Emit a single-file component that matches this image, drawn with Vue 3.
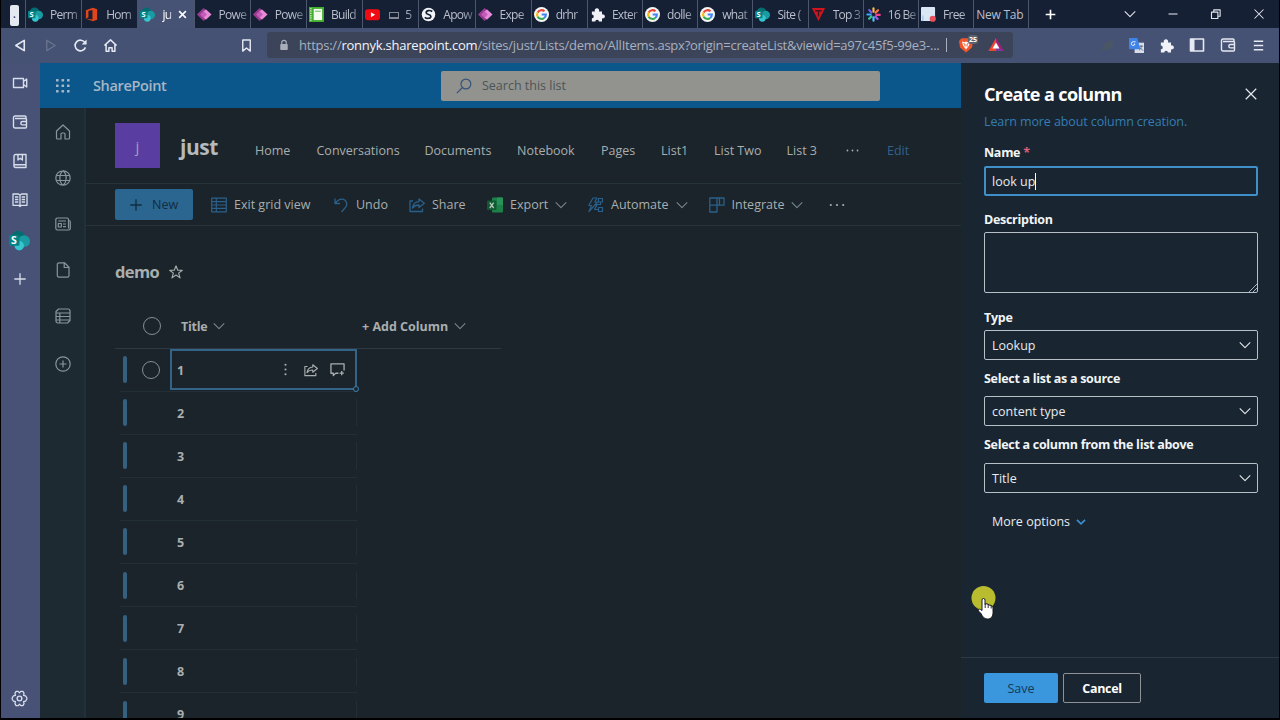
<script setup>
import { h, ref } from 'vue'

const line = (d, w = 1.2) => `<path d="${d}" fill="none" stroke="currentColor" stroke-width="${w}" stroke-linejoin="round"/>`

const sharePoint = '<circle cx="7" cy="5.5" r="5" fill="#036c70"/><circle cx="11.5" cy="8.5" r="4.5" fill="#1a9ba1"/><circle cx="7.8" cy="12" r="3.6" fill="#37c6d0"/><rect x="0" y="4" width="8" height="8" rx="1" fill="#038387"/><text x="1.6" y="11" font-family="Open Sans, sans-serif" font-size="8" font-weight="700" fill="#fff">S</text>'
const google = '<circle cx="8" cy="8" r="8" fill="#f5f5f5"/><g fill="none" stroke-width="2.2"><path d="M11.2 4.6A4.7 4.7 0 0 0 3.9 5.8" stroke="#ea4335"/><path d="M3.9 5.8a4.7 4.7 0 0 0 0 4.5" stroke="#fbbc05"/><path d="M3.9 10.3a4.7 4.7 0 0 0 7 1.4" stroke="#34a853"/><path d="M10.9 11.7c1.2-.9 1.8-2.1 1.8-3.7H8.2" stroke="#4285f4"/></g>'
const powerApps = '<path d="M7 1L14 8L7 15L0 8Z" fill="#9b3b92"/><path d="M9.5 2.5L15.5 8L9.5 13.5L4 8Z" fill="#e58bd8"/><path d="M7 4.5L10.5 8L7 11.5L3.5 8Z" fill="#c45bb8"/>'
const puzzle = '<path d="M2 4.8H5.2a2.4 2.4 0 1 1 4.4 0H12.800V8a2.200 2.200 0 1 1 0 4V15.500H9.500a1.900 1.900 0 1 0-3.800 0H2V12a2 2 0 1 0 0-4Z" fill="#f0f2f7"/>'
const wallet = line('M14 4.5V3a1 1 0 0 0-1-1H3a1.5 1.5 0 0 0-1.5 1.5v9A1.5 1.5 0 0 0 3 14h10.5a1 1 0 0 0 1-1V5.5a1 1 0 0 0-1-1H3M14.5 7.5H10.5a1.7 1.7 0 0 0 0 3.4H14.5', 1.4)

const icons = {
  sharePoint,
  google,
  powerApps,
  puzzle,
  wallet,
  office: '<path d="M2 3.5L9.5 .8L14 2.4V13.6L9.5 15.2L2 12.5L9 13.2V3.2L4.7 4.3V11L2 12.5Z" fill="#e2451c"/>',
  book: '<rect width="16" height="16" fill="#3eae2b"/><path d="M5 2h9v12H5z" fill="#f3fbef"/><path d="M2 1v14" stroke="#d7f2cd" stroke-width="1.3" stroke-dasharray="1.5 1"/><path d="M6.5 4.5h6" stroke="#62b752"/>',
  youtube: '<rect y="2.5" width="16" height="11.5" rx="3" fill="#f20a12"/><path d="M6.3 5.6L10.8 8.2L6.3 10.8Z" fill="#fff"/>',
  apower: '<circle cx="8" cy="8" r="7.2" fill="#f2f4f7"/><path d="M12 4.800C9.500 3 5.500 3.500 5.500 6C5.500 8.500 10.500 7.500 10.500 10C10.500 12.300 6.500 12.800 4 11" fill="none" stroke="#152034" stroke-width="1.800"/>',
  triangle: '<path d="M1 1h14L8 15Z" fill="#d3141c"/><path d="M4.5 4h7M8 4v6" stroke="#3a1624" stroke-width="1.5"/>',
  burst: '<g stroke-width="2.3" stroke-linecap="round"><path d="M8 5V1.5" stroke="#ffbe3d"/><path d="M10.2 6l2.6-2.6" stroke="#ff7043"/><path d="M11 8.4h3.7" stroke="#f2448a"/><path d="M10 10.2l2.4 2.5" stroke="#a855f7"/><path d="M8 11v3.7" stroke="#4fc3f7"/><path d="M5.8 10L3.3 12.5" stroke="#38c98d"/><path d="M5 8H1.5" stroke="#3ba8ff"/><path d="M5.8 5.8L3.4 3.3" stroke="#765cf5"/></g>',
  free: '<rect x="0" y="0" width="15" height="15" rx="1" fill="#d9e6f4"/><path d="M2 15V9" stroke="#8ab4df"/><circle cx="12.5" cy="12.5" r="3.3" fill="#e9515d"/>',
  back: line('M12 2.5V13.5L3 8Z', 1.7),
  forward: line('M4 2.5V13.5L13 8Z', 1.5),
  reload: line('M13.3 10A5.7 5.7 0 1 1 12.6 4.7', 1.7) + '<path d="M14.5 1.5V6.8H9.3Z" fill="currentColor"/>',
  home: line('M1.5 8L8 2L14.5 8M3.3 7V14H6.3V10.5H9.7V14H12.7V7', 1.6),
  bookmark: line('M4 2.2h8V14L8 10.7L4 14Z', 1.5),
  lock: '<rect x="3" y="6.5" width="10" height="8" rx="1" fill="currentColor"/><path d="M5 7V4.8a3 3 0 0 1 6 0V7" fill="none" stroke="currentColor" stroke-width="1.5"/>',
  brave: '<path d="M3.5 1.2h9L15 4L14 10.5L8 15.5L2 10.5L1 4Z" fill="#f0562b"/><path d="M4 4.5l2.5.7L8 4.6l1.5.6L12 4.5L11 8.5L8 12.5L5 8.5Z" fill="#fff"/><path d="M5.5 6.5l1.5.7v2.3M10.5 6.5L9 7.2v2.3" fill="none" stroke="#f0562b"/>',
  bat: '<path d="M8 1L15.5 14H.5Z" fill="#7b3aa0"/><path d="M8 1L.5 14H8Z" fill="#f0452b"/><path d="M8 1L15.5 14L11 11.5L8 6.5Z" fill="#a71e72"/><path d="M8 5.5L11.5 11.5H4.5Z" fill="#fff"/>',
  translate: '<rect x="6" y="5" width="10" height="11" fill="#d6deea"/><path d="M0 0h9l3 12H1a1 1 0 0 1-1-1Z" fill="#3d83e9"/><path d="M7 4H4.6a2 2 0 1 0 1.8 2.5H5" fill="none" stroke="#eef3fb"/><path d="M11 8.8H15M13 7.5v1.3c0 2-1 3.5-2.2 4.2M12 10.5l3 3" fill="none" stroke="#5a6b87"/>',
  panelLeft: line('M1.5 2h13v12h-13Z', 1.6) + '<path d="M1 2h4.500v12H1z" fill="currentColor"/>',
  menu: line('M3 3.5H13M3 8H13M3 12.5H13', 1.6),
  down: line('M1 4.5L8 11.5L15 4.5', 1.4),
  downBold: line('M1.5 4.5L8 11L14.5 4.5', 2.6),
  minimise: line('M2 8H14', 1.4),
  restore: line('M2 5.5h8.5V14H2ZM5 5V2.5h8.5V11H11', 1.5),
  close: line('M2 2L14 14M14 2L2 14', 1.4),
  closeBold: line('M2 2L14 14M14 2L2 14', 2.8),
  add: line('M8 1.5V14.5M1.5 8H14.5', 1.5),
  addBold: line('M8 1V15M1 8H15', 2.4),
  video: line('M1.5 3.5h10v9h-10ZM11.5 6.5L14.7 4V12L11.5 9.5', 1.4),
  journal: line('M2 13.5V3.2A1.7 1.7 0 0 1 3.7 1.5H14V14.5H3.3A1.3 1.3 0 0 1 3.3 11.7H14M6 1.5V7L8.2 5.3L10.4 7V1.5', 1.4),
  reader: line('M8 2.8V14.8M1 2H6.5L8 3L9.5 2H15V13.3H9.5L8 14.5L6.5 13.3H1ZM3 5H6.3M3 7.5H6.3M3 10H6.3M9.7 5H13M9.7 7.5H13M9.7 10H13', 1.3),
  gear: line('M4.800 1.300H6.800L8 2.700L9.200 1.300H11.200L12.300 3.200L11.800 5L13.700 5.500L14.900 7.300V8.700L13.700 10.500L11.800 11L12.300 12.800L11.200 14.700H9.200L8 13.300L6.800 14.700H4.800L3.700 12.800L4.200 11L2.300 10.500L1.100 8.700V7.300L2.300 5.500L4.200 5L3.700 3.200Z', 1.2) + '<circle cx="8" cy="8" r="2.2" fill="none" stroke="currentColor" stroke-width="1.3"/>',
  waffle: '<g fill="currentColor">' + [1.5, 7, 12.5].map(y => [1.5, 7, 12.5].map(x => `<rect x="${x - 0.5}" y="${y - 0.5}" width="2.6" height="2.6" rx=".6"/>`).join('')).join('') + '</g>',
  house: line('M1.5 7L8 1L14.5 7V14a1 1 0 0 1-1 1H10V10a1 1 0 0 0-1-1H7a1 1 0 0 0-1 1V15H2.5a1 1 0 0 1-1-1Z', 1.2),
  globe: line('M8 .8a7.2 7.2 0 1 0 0 14.4A7.2 7.2 0 0 0 8 .8C3.8 4 3.8 12 8 15.2C12.2 12 12.2 4 8 .8M1.5 5.5h13M1.5 10.5h13', 1.2),
  news: line('M2.5 2H12a1.5 1.5 0 0 1 1.5 1.5V12.5M13.5 4.5H14a1.3 1.3 0 0 1 1.3 1.3V12.3A1.7 1.7 0 0 1 13.6 14H2.5A1.7 1.7 0 0 1 .8 12.3V3.7A1.7 1.7 0 0 1 2.5 2M3.3 5H11M3.3 7.5h3v3.5h-3ZM8 8h3M8 10.7h3', 1.2),
  file: line('M4 .8H9.5L14 5.2V13.5a1.7 1.7 0 0 1-1.7 1.7H4a1.7 1.7 0 0 1-1.7-1.7V2.5A1.7 1.7 0 0 1 4 .8ZM9.2 1V5.5H13.8', 1.2),
  list: line('M3.5 1H13a2 2 0 0 1 2 2v9.5L12.5 15H3a2 2 0 0 1-2-2V3.5ZM1 5H15M1 8.5H15M1 12H15M4.8 5V15', 1.2),
  plusCircle: line('M8 .8a7.2 7.2 0 1 0 0 14.4A7.2 7.2 0 0 0 8 .8M8 4.5v7M4.5 8h7', 1.2),
  search: line('M.8 15.2L6 10M14.8 6a4.9 4.9 0 1 1-9.8 0a4.9 4.9 0 0 1 9.8 0Z', 1.2),
  grid: line('M.7 1.2h14.6v13.6H.7ZM5.3 1.2V14.8M.7 4.6H15.3M.7 8H15.3M.7 11.4H15.3', 1.2),
  undo: line('M2 1.5V6.5H7M2.3 6C5 2.5 9 1 12 3.2C15 5.8 13.8 9.5 11.5 11.5L8.5 15', 1.3),
  share: line('M4 4H1V14.5H13.5V11.5M10 2L15.3 6.3L10 10.5V8C7 8 5 9 3.5 11C4 7 6.5 4.8 10 4.6Z', 1.3),
  excel: '<rect x="5" y=".5" width="11" height="15" rx="1" fill="#1d8048"/><path d="M10 .5h5a1 1 0 0 1 1 1V8H10Z" fill="#27935a"/><rect x="0" y="3.5" width="9.5" height="9.5" rx="1" fill="#0f5a30"/><path d="M2.8 5.7L6.7 11M6.7 5.7L2.8 11" stroke="#b7c9bf" stroke-width="1.3"/>',
  automate: line('M5 1H9L6.8 5H9.5L1 14.5L3.5 8.5H.8ZM10.5 1.5h4v3.5h-4ZM10.5 10.5h4v4h-4ZM12.5 5V7.5H8.5V10M9 7.5L6.5 12.5H10.5', 1.2),
  integrate: line('M.8 1H15V8.2H8V15H.8ZM.8 8.2H8V1M10.5 1V8.2', 1.3),
  star: line('M8 1L10 6H15.2L11 9.3L12.6 14.7L8 11.5L3.4 14.7L5 9.3L.8 6H6Z', 1.3),
  dots: '<g fill="currentColor"><circle cx="1.8" cy="8" r="1.1"/><circle cx="8" cy="8" r="1.1"/><circle cx="14.2" cy="8" r="1.1"/></g>',
  dotsV: '<g fill="currentColor"><circle cx="8" cy="2.2" r="1.3"/><circle cx="8" cy="8" r="1.3"/><circle cx="8" cy="13.8" r="1.3"/></g>',
  comment: line('M6 12L3.5 14.5V12H1V2H15V9M6 12H9M12.5 9.5V14M10.3 11.8H14.8', 1.4),
}

const Icon = props => h('svg', {
  viewBox: '0 0 16 16',
  width: props.size || 16,
  height: props.size || 16,
  innerHTML: icons[props.name],
})
Icon.props = ['name', 'size']

const tabs = [
  { icon: 'sharePoint', label: 'Perm' },
  { icon: 'office', label: 'Hom' },
  { icon: 'sharePoint', label: 'ju', active: true },
  { icon: 'powerApps', label: 'Powe' },
  { icon: 'powerApps', label: 'Powe' },
  { icon: 'book', label: 'Build' },
  { icon: 'youtube', label: '5', laptop: true },
  { icon: 'apower', label: 'Apow' },
  { icon: 'powerApps', label: 'Expe' },
  { icon: 'google', label: 'drhr' },
  { icon: 'puzzle', label: 'Exter' },
  { icon: 'google', label: 'dolle' },
  { icon: 'google', label: 'what' },
  { icon: 'sharePoint', label: 'Site (' },
  { icon: 'triangle', label: 'Top 3' },
  { icon: 'burst', label: '16 Be' },
  { icon: 'free', label: 'Free' },
  { label: 'New Tab' },
]

const nav = [
  { label: 'Home', width: 61.5 },
  { label: 'Conversations', width: 108 },
  { label: 'Documents', width: 92.5 },
  { label: 'Notebook', width: 84 },
  { label: 'Pages', width: 60 },
  { label: 'List1', width: 53 },
  { label: 'List Two', width: 72.5 },
  { label: 'List 3', width: 59.5 },
]

const commands = [
  { icon: 'grid', label: 'Exit grid view', width: 122 },
  { icon: 'undo', label: 'Undo', width: 76 },
  { icon: 'share', label: 'Share', width: 78 },
  { icon: 'excel', label: 'Export', width: 101, menu: true },
  { icon: 'automate', label: 'Automate', width: 120.5, menu: true },
  { icon: 'integrate', label: 'Integrate', width: 120, menu: true },
]

const rail = ['house', 'globe', 'news', 'file', 'list', 'plusCircle']
const rows = [1, 2, 3, 4, 5, 6, 7, 8, 9]
const name = ref('look up')
</script>

<template>
  <div class="window">
    <header class="tab-strip">
      <div class="pinned">.</div>
      <div class="tabs">
        <div v-for="(tab, i) in tabs" :key="i" class="tab" :class="{ active: tab.active, plain: !tab.icon }">
          <Icon v-if="tab.icon" :name="tab.icon" :size="15" />
          <span class="tab-label"><i v-if="tab.laptop" class="laptop"></i>{{ tab.label }}</span>
          <Icon v-if="tab.active" name="closeBold" :size="9" class="tab-close" />
        </div>
      </div>
      <Icon name="addBold" :size="11" class="new-tab" />
      <div class="window-buttons">
        <Icon name="down" :size="12" />
        <Icon name="minimise" :size="12" />
        <Icon name="restore" :size="12" />
        <Icon name="close" :size="12" />
      </div>
    </header>

    <div class="toolbar">
      <div class="nav-buttons">
        <Icon name="back" :size="15" />
        <Icon name="forward" :size="15" class="disabled" />
        <Icon name="reload" :size="15" />
        <Icon name="home" :size="15" />
      </div>
      <Icon name="bookmark" :size="15" />
      <div class="address">
        <Icon name="lock" :size="12" class="lock" />
        <span class="url">https://<b>ronnyk.sharepoint.com</b>/sites/just/Lists/demo/AllItems.aspx?origin=createList&amp;viewid=a97c45f5-99e3-...</span>
        <span class="address-rule"></span>
        <div class="shield">
          <Icon name="brave" :size="16" />
          <span class="shield-count">25</span>
        </div>
        <Icon name="bat" :size="16" />
      </div>
      <div class="extensions">
        <span class="leaf"></span>
        <Icon name="translate" :size="15" />
        <Icon name="puzzle" :size="15" />
        <Icon name="panelLeft" :size="16" />
        <Icon name="wallet" :size="16" />
        <Icon name="menu" :size="15" />
      </div>
    </div>

    <div class="body">
      <aside class="browser-side">
        <Icon name="video" />
        <Icon name="wallet" />
        <Icon name="journal" />
        <Icon name="reader" />
        <Icon name="sharePoint" :size="21" class="side-app" />
        <Icon name="add" :size="14" class="side-add" />
        <Icon name="gear" :size="17" class="gear" />
      </aside>

      <div class="site">
        <div class="suite-bar">
          <Icon name="waffle" class="waffle" />
          <span class="suite-name">SharePoint</span>
          <div class="search">
            <Icon name="search" />
            <span>Search this list</span>
          </div>
        </div>
        <div class="site-body">
          <nav class="rail">
            <Icon v-for="item in rail" :key="item" :name="item" class="rail-icon" :class="item" />
          </nav>
          <main class="main">
            <div class="site-header">
              <div class="logo">j</div>
              <h1>just</h1>
              <div class="site-nav">
                <span v-for="item in nav" :key="item.label" :style="{ width: item.width + 'px' }">{{ item.label }}</span>
                <Icon name="dots" :size="13" />
                <a class="edit">Edit</a>
              </div>
            </div>

            <div class="command-bar">
              <button class="new-button"><Icon name="add" :size="14" />New</button>
              <div v-for="item in commands" :key="item.label" class="command" :style="{ width: item.width + 'px' }">
                <Icon :name="item.icon" class="command-icon" :class="item.icon" />
                <span>{{ item.label }}</span>
                <Icon v-if="item.menu" name="down" :size="12" class="chevron" />
              </div>
              <Icon name="dots" class="more" />
            </div>

            <div class="list-title">
              <h2>demo</h2>
              <Icon name="star" :size="14" />
            </div>

            <div class="table">
              <div class="table-head">
                <span class="circle"></span>
                <span class="title-head">Title <Icon name="down" :size="12" class="chevron" /></span>
                <span class="add-head">+ Add Column <Icon name="down" :size="12" class="chevron" /></span>
              </div>
              <div v-for="row in rows" :key="row" class="row" :class="{ selected: row === 1 }">
                <span class="bar"></span>
                <span class="row-check"><span v-if="row === 1" class="circle"></span></span>
                <div class="cell">
                  <span class="cell-text">{{ row }}</span>
                  <template v-if="row === 1">
                    <Icon name="dotsV" :size="13" />
                    <Icon name="share" :size="14" />
                    <Icon name="comment" :size="15" />
                    <span class="handle"></span>
                  </template>
                </div>
              </div>
            </div>
          </main>
        </div>
      </div>

      <section class="panel">
        <div class="panel-body">
          <div class="panel-title">
            <h3>Create a column</h3>
            <Icon name="close" :size="14" />
          </div>
          <a class="learn">Learn more about column creation.</a>
          <label class="name-label">Name <em>*</em></label>
          <div class="field focused"><span>{{ name }}</span><i class="caret"></i></div>
          <label class="description-label">Description</label>
          <div class="field area">
            <svg class="grip" width="8" height="8"><path d="M0 8L8 0M4 8L8 4" stroke="currentColor" /></svg>
          </div>
          <label class="type-label">Type</label>
          <div class="field">Lookup<Icon name="down" :size="12" /></div>
          <label class="source-label">Select a list as a source</label>
          <div class="field">content type<Icon name="down" :size="12" /></div>
          <label class="column-label">Select a column from the list above</label>
          <div class="field">Title<Icon name="down" :size="12" /></div>
          <div class="more-options">More options <Icon name="downBold" :size="10" /></div>
        </div>
        <footer class="panel-footer">
          <button class="save">Save</button>
          <button class="cancel">Cancel</button>
        </footer>
      </section>
    </div>

    <div class="pointer">
      <svg width="28" height="36" viewBox="0 0 28 36">
        <circle cx="12.5" cy="12" r="12" fill="#b9bc2e" />
        <path d="M11 14a1.5 1.5 0 0 1 3 0V18.5l1-.8 2 .5 1 .8 2 .3.7 1 1.3.8V26.5c0 4-2 6.5-5.5 6.5S11.5 30.5 10 27.5L7.5 25c-1-1.5.5-2.5 2-1.5l1.5 1Z" fill="#fff" stroke="#1b1d20" stroke-width="1" />
        <path d="M14.2 17.5v4.5M17.2 18v4M20.2 19v3.5" stroke="#1b1d20" stroke-width=".9" />
      </svg>
    </div>
  </div>
</template>

<style>
body {
  margin: 0;
  background: #000;
}
</style>

<style scoped>
* {
  box-sizing: border-box;
}

svg {
  display: block;
  flex: none;
}

h1,
h2,
h3 {
  margin: 0;
  font-weight: 700;
}

button {
  padding: 0;
  font: inherit;
}

.window {
  position: relative;
  display: flex;
  flex-direction: column;
  width: 1280px;
  height: 720px;
  padding: 0 1px 2px;
  overflow: hidden;
  background: #000;
  color: #a9aeaf;
  font-family: "Open Sans", "Noto Sans", sans-serif;
  font-size: 12.5px;
  white-space: nowrap;
}

.tab-strip {
  display: flex;
  align-items: center;
  height: 28px;
  flex: none;
  background: #152035;
  color: #b9bfcc;
}

.pinned {
  width: 9px;
  height: 21px;
  margin: 2px 6px 0 9px;
  border-radius: 2px;
  background: #e4e8f1;
  color: #222b40;
  text-align: center;
}

.tabs {
  display: flex;
  height: 28px;
}

.tab {
  display: flex;
  width: 56.2px;
  align-items: center;
  gap: 7px;
  padding-left: 2px;
  border-left: 1px solid #4c566c;
}

.tab:nth-child(n + 11) {
  width: 55.2px;
}

.tab:last-child {
  width: 56.2px;
  border-right: 1px solid #4c566c;
}

.tab-label {
  flex: 1;
  font-size: 12px;
  letter-spacing: -0.7px;
  mask-image: linear-gradient(to right, #000 60%, rgba(0, 0, 0, 0.3));
}

.tab.plain .tab-label {
  letter-spacing: -0.25px;
  mask-image: none;
}

.tab.active {
  border-color: #475375;
  background: #475375;
  color: #fff;
}

.tab-close {
  margin: 0 7px 0 -2px;
}

.laptop {
  display: inline-block;
  width: 10px;
  height: 7px;
  margin: 0 6px 0 2px;
  border: 1px solid #858b95;
  border-bottom-width: 2px;
}

.new-tab {
  margin-left: 16px;
  color: #fff;
}

.window-buttons {
  display: flex;
  gap: 31px;
  margin-left: auto;
  margin-right: 14px;
  color: #e4e7ee;
}

.toolbar {
  display: flex;
  align-items: center;
  height: 35px;
  flex: none;
  padding: 0 0 1px 12px;
  background: #465273;
  color: #e5e9f3;
}

.nav-buttons {
  display: flex;
  gap: 15px;
  margin-right: 121px;
}

.disabled {
  color: #69728b;
}

.address {
  display: flex;
  align-items: center;
  width: 746px;
  height: 26px;
  margin-left: 13px;
  padding-left: 11px;
  border-radius: 3px;
  background: #3b4459;
}

.lock {
  color: #a8adb9;
}

.url {
  flex: none;
  width: 642px;
  margin-left: 9px;
  color: #a9b0bf;
  font-size: 13px;
  letter-spacing: -0.24px;
}

.url b {
  color: #f3f5f9;
  font-weight: 400;
}

.address-rule {
  width: 1px;
  height: 14px;
  margin: 0 11px 0 5px;
  background: #a9b0bf;
}

.shield {
  position: relative;
  margin-right: 14px;
}

.shield-count {
  position: absolute;
  top: -2px;
  left: 10px;
  padding: 0 1px;
  border-radius: 3px;
  background: #5c6270;
  color: #fff;
  font-size: 7px;
  font-weight: 700;
  line-height: 9px;
}

.extensions {
  display: flex;
  align-items: center;
  gap: 15px;
  margin-left: auto;
  margin-right: 13px;
}

.leaf {
  width: 12px;
  height: 9px;
  border-radius: 10px 0;
  background: #4b5664;
}

.body {
  display: flex;
  flex: 1;
  min-height: 0;
}

.browser-side {
  display: flex;
  flex-direction: column;
  align-items: center;
  width: 39px;
  padding: 12px 2px 11px 0;
  background: #475276;
  color: #d7ddea;
}

.browser-side svg + svg {
  margin-top: 23px;
}

.browser-side .side-app {
  margin-top: 22px;
}

.browser-side .side-add {
  margin-top: 21px;
}

.browser-side .gear {
  margin-top: auto;
}

.site {
  display: flex;
  flex-direction: column;
  width: 921px;
}

.suite-bar {
  display: flex;
  align-items: center;
  height: 45px;
  flex: none;
  background: #0b568b;
  color: #a6b7c5;
}

.waffle {
  margin-left: 15px;
}

.suite-name {
  width: 348px;
  margin-left: 22px;
  font-size: 14.5px;
  font-weight: 600;
  letter-spacing: -0.35px;
}

.search {
  display: flex;
  align-items: center;
  gap: 10px;
  width: 439px;
  height: 30px;
  padding-left: 15px;
  border-radius: 2px;
  background: #92938e;
  color: #4c5357;
}

.search svg {
  color: #36547a;
}

.site-body {
  display: flex;
  flex: 1;
  min-height: 0;
}

.rail {
  display: flex;
  flex-direction: column;
  align-items: center;
  width: 46px;
  padding: 16px 0 0 1px;
  border-right: 2px solid #20313a;
  background: #1e2a32;
  color: #89959b;
}

.rail-icon {
  margin-bottom: 30px;
}

.rail-icon.list {
  margin-bottom: 32px;
}

.main {
  flex: 1;
  min-width: 0;
  overflow: hidden;
  background: #1a242a;
}

.site-header {
  display: flex;
  align-items: center;
  height: 76px;
  padding-left: 29px;
  border-bottom: 1px solid #27333a;
}

.logo {
  width: 45px;
  height: 45px;
  background: #5a3da0;
  color: #a69bbb;
  font-size: 15px;
  line-height: 46px;
  text-align: center;
}

h1 {
  width: 75px;
  margin: 2px 0 0 20px;
  color: #b5babc;
  font-size: 21px;
  letter-spacing: -0.5px;
}

.site-nav {
  display: flex;
  align-items: center;
  margin-top: 10px;
}

.edit {
  margin-left: 28px;
  color: #32618c;
}

.command-bar {
  display: flex;
  align-items: center;
  height: 42px;
  padding-left: 29px;
  border-bottom: 1px solid #27333a;
}

.new-button {
  display: flex;
  align-items: center;
  gap: 9px;
  width: 78px;
  height: 31px;
  margin-right: 18px;
  padding-left: 14px;
  border: 0;
  border-radius: 2px;
  background: #2b6690;
  color: #122c40;
}

.command {
  display: flex;
  align-items: center;
  gap: 7px;
}

.command-icon {
  color: #2a608c;
}

.chevron {
  color: #7b878d;
}

.list-title {
  display: flex;
  align-items: center;
  gap: 10px;
  height: 67px;
  padding: 24px 0 0 29px;
}

h2 {
  font-size: 16.5px;
  letter-spacing: -0.6px;
}

.table {
  margin-left: 29px;
}

.table-head {
  display: flex;
  align-items: center;
  width: 386px;
  height: 55.5px;
  padding: 12px 0 0 28px;
  border-bottom: 1px solid #2e3a41;
  font-weight: 700;
  letter-spacing: -0.25px;
}

.circle {
  display: block;
  width: 18px;
  height: 18px;
  border: 1.5px solid #858e92;
  border-radius: 50%;
}

.title-head,
.add-head {
  display: flex;
  align-items: center;
  gap: 6px;
}

.add-head {
  letter-spacing: 0;
}

.title-head {
  width: 181px;
  margin-left: 20px;
}

.row {
  display: flex;
  align-items: center;
  width: 237px;
  height: 43.1px;
  margin-left: 5px;
  border-bottom: 1px solid #222f36;
}

.bar {
  width: 4px;
  height: 27px;
  margin-left: 3px;
  border-radius: 2px;
  background: #35607f;
}

.row-check {
  width: 43px;
  padding-left: 15px;
}

.cell {
  position: relative;
  display: flex;
  align-items: center;
  flex: 1;
  height: 27px;
  padding: 0 12px 0 7px;
  border-right: 1px solid #222f36;
}

.cell-text {
  flex: 1;
  padding-top: 1px;
  font-weight: 700;
}

.selected .cell {
  height: 41px;
  gap: 12px;
  padding: 0 10px 0 5px;
  border: 2px solid #336487;
}

.handle {
  position: absolute;
  right: -4px;
  bottom: -4px;
  width: 6px;
  height: 6px;
  border: 1px solid #4180ab;
  border-radius: 50%;
  background: #1a242a;
}

.panel {
  display: flex;
  flex: 1;
  flex-direction: column;
  background: #192531;
  color: #e6ebef;
}

.panel-body {
  display: flex;
  flex: 1;
  flex-direction: column;
  padding: 18px 21px 0 23px;
}

.panel-title {
  display: flex;
  align-items: center;
  justify-content: space-between;
  height: 26px;
}

h3 {
  color: #fff;
  font-size: 18px;
  letter-spacing: -0.62px;
}

.learn {
  margin-top: 6px;
  color: #347db4;
  letter-spacing: -0.1px;
  line-height: 18px;
}

label {
  height: 18px;
  color: #f2f5f7;
  font-weight: 700;
  letter-spacing: -0.29px;
  line-height: 18px;
}

label em {
  color: #d9607a;
  font-style: normal;
}

.name-label {
  margin: 13px 0 4px;
}

.description-label {
  margin: 15px 0 3px;
}

.type-label {
  margin: 16px 0 3px;
}

.source-label {
  margin: 10px 0 8px;
}

.column-label {
  margin: 10px 0 9px;
}

.field {
  position: relative;
  display: flex;
  align-items: center;
  flex: none;
  height: 30px;
  padding: 0 6px 0 7px;
  border: 1px solid #b7c0c6;
  border-radius: 2px;
}

.field > svg {
  margin-left: auto;
}

.field.focused {
  padding-left: 6px;
  border: 2px solid #3f8fc9;
}

.caret {
  width: 1px;
  height: 17px;
  background: #fff;
}

.area {
  height: 61px;
}

.grip {
  position: absolute;
  right: 0;
  bottom: 0;
  color: #aab3b9;
}

.more-options {
  display: flex;
  align-items: center;
  gap: 6px;
  margin: 20px 0 0 8px;
}

.more-options svg {
  color: #3d8ece;
}

.panel-footer {
  display: flex;
  gap: 5px;
  height: 61px;
  padding: 15px 0 0 23px;
  border-top: 1px solid #2d3a45;
}

.save,
.cancel {
  height: 30px;
  border: 0;
  border-radius: 2px;
}

.save {
  width: 74px;
  background: #3a96dd;
  color: #133b59;
}

.cancel {
  width: 78px;
  border: 1px solid #8d9295;
  background: transparent;
  color: #fff;
  font-weight: 700;
  letter-spacing: -0.3px;
}

.pointer {
  position: absolute;
  left: 971px;
  top: 586px;
}
</style>
